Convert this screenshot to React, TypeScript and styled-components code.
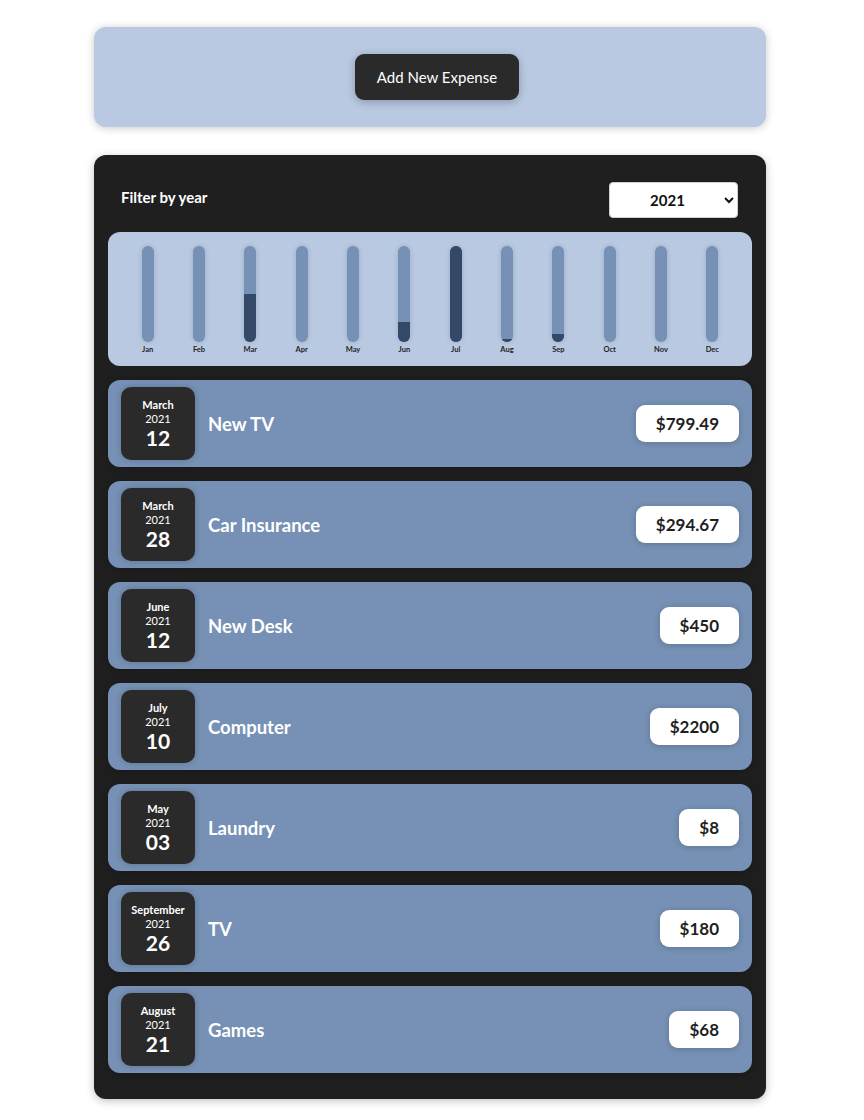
import styled, { createGlobalStyle } from "styled-components";

const GlobalStyle = createGlobalStyle`
  * {
    box-sizing: border-box;
  }
  body {
    margin: 0;
    background: #ffffff;
    font-family: Lato, "Open Sans", sans-serif;
  }
`;

const Page = styled.div`
  width: 672px;
  margin-left: 94px;
  padding: 27px 0 22px;
  display: flex;
  flex-direction: column;
  gap: 28px;
`;

const NewExpense = styled.div`
  height: 100px;
  background: #b8c9e1;
  border-radius: 12px;
  box-shadow: 0 1px 8px rgba(0, 0, 0, 0.22);
  display: flex;
  align-items: center;
  justify-content: center;
  padding-left: 14px;
`;

const AddButton = styled.button`
  width: 164px;
  height: 46px;
  border: none;
  border-radius: 9px;
  background: #2a2a2a;
  color: #ffffff;
  font-family: Lato, "Open Sans", sans-serif;
  font-size: 15px;
  cursor: pointer;
  box-shadow: 0 2px 8px rgba(0, 0, 0, 0.25);
`;

const Panel = styled.div`
  background: #1f1f1f;
  border-radius: 12px;
  padding: 14px 14px 26px;
  box-shadow: 0 2px 8px rgba(0, 0, 0, 0.25);
  display: flex;
  flex-direction: column;
  gap: 14px;
`;

const FilterRow = styled.div`
  display: flex;
  align-items: center;
  justify-content: space-between;
  padding: 0 14px 0 13px;
  margin-top: 13px;
`;

const FilterLabel = styled.label`
  color: #ffffff;
  font-weight: 700;
  font-size: 15px;
  margin-top: -6px;
`;

const YearSelect = styled.select`
  width: 129px;
  height: 36px;
  border: 1px solid #cfcfcf;
  border-radius: 4px;
  background: #ffffff;
  font-family: Lato, "Open Sans", sans-serif;
  font-weight: 700;
  font-size: 15px;
  color: #111;
  text-align: center;
  text-align-last: center;
  padding: 0 6px;
`;

const Chart = styled.div`
  height: 134px;
  padding: 14px;
  background: #b8c9e1;
  border-radius: 12px;
  display: grid;
  grid-template-columns: repeat(12, 1fr);
`;

const BarColumn = styled.div`
  display: flex;
  flex-direction: column;
  align-items: center;
`;

const BarTrack = styled.div`
  width: 12px;
  height: 96px;
  border-radius: 6px;
  background: #7691b5;
  overflow: hidden;
  display: flex;
  flex-direction: column;
  justify-content: flex-end;
  box-shadow: 0 0 4px rgba(60, 80, 120, 0.25);
`;

const BarFill = styled.div`
  width: 100%;
  background: #344966;
`;

const BarLabel = styled.div`
  font-size: 7.5px;
  font-weight: 700;
  color: #1f1f1f;
  margin-top: 3px;
  line-height: 9px;
`;

const Item = styled.div`
  height: 87px;
  background: #7691b5;
  border-radius: 12px;
  padding: 7px 13px;
  display: flex;
  align-items: center;
  box-shadow: 0 1px 8px rgba(0, 0, 0, 0.25);
`;

const DateBox = styled.div`
  width: 74px;
  height: 73px;
  border-radius: 10px;
  background: #2a2a2a;
  color: #ffffff;
  display: flex;
  flex-direction: column;
  align-items: center;
  justify-content: center;
  box-shadow: 0 0 6px rgba(0, 0, 0, 0.2);
  flex-shrink: 0;
`;

const DateMonth = styled.div`
  font-size: 11px;
  font-weight: 700;
  line-height: 14px;
`;

const DateYear = styled.div`
  font-size: 11px;
  line-height: 14px;
`;

const DateDay = styled.div`
  font-size: 21px;
  font-weight: 700;
  line-height: 24px;
`;

const Title = styled.h2`
  flex: 1;
  margin: 0 13px;
  color: #ffffff;
  font-size: 18.5px;
  font-weight: 700;
`;

const Price = styled.div`
  background: #ffffff;
  color: #1f1f1f;
  font-size: 17px;
  font-weight: 700;
  padding: 0 20px;
  height: 37px;
  line-height: 37px;
  border-radius: 9px;
  box-shadow: 0 1px 6px rgba(0, 0, 0, 0.2);
`;

const expenses = [
  { month: "March", day: "12", title: "New TV", amount: 799.49, m: 2 },
  { month: "March", day: "28", title: "Car Insurance", amount: 294.67, m: 2 },
  { month: "June", day: "12", title: "New Desk", amount: 450, m: 5 },
  { month: "July", day: "10", title: "Computer", amount: 2200, m: 6 },
  { month: "May", day: "03", title: "Laundry", amount: 8, m: 4 },
  { month: "September", day: "26", title: "TV", amount: 180, m: 8 },
  { month: "August", day: "21", title: "Games", amount: 68, m: 7 },
];

const months = ["Jan", "Feb", "Mar", "Apr", "May", "Jun", "Jul", "Aug", "Sep", "Oct", "Nov", "Dec"];

export default function App() {
  const totals = months.map((_, i) =>
    expenses.filter((e) => e.m === i).reduce((s, e) => s + e.amount, 0)
  );
  const max = Math.max(...totals);

  return (
    <>
      <GlobalStyle />
      <Page>
        <NewExpense>
          <AddButton>Add New Expense</AddButton>
        </NewExpense>
        <Panel>
          <FilterRow>
            <FilterLabel>Filter by year</FilterLabel>
            <YearSelect defaultValue="2021">
              <option value="2022">2022</option>
              <option value="2021">2021</option>
              <option value="2020">2020</option>
              <option value="2019">2019</option>
            </YearSelect>
          </FilterRow>
          <Chart>
            {months.map((label, i) => (
              <BarColumn key={label}>
                <BarTrack>
                  <BarFill style={{ height: `${(totals[i] / max) * 100}%` }} />
                </BarTrack>
                <BarLabel>{label}</BarLabel>
              </BarColumn>
            ))}
          </Chart>
          {expenses.map((e) => (
            <Item key={e.title}>
              <DateBox>
                <DateMonth>{e.month}</DateMonth>
                <DateYear>2021</DateYear>
                <DateDay>{e.day}</DateDay>
              </DateBox>
              <Title>{e.title}</Title>
              <Price>${e.amount}</Price>
            </Item>
          ))}
        </Panel>
      </Page>
    </>
  );
}
